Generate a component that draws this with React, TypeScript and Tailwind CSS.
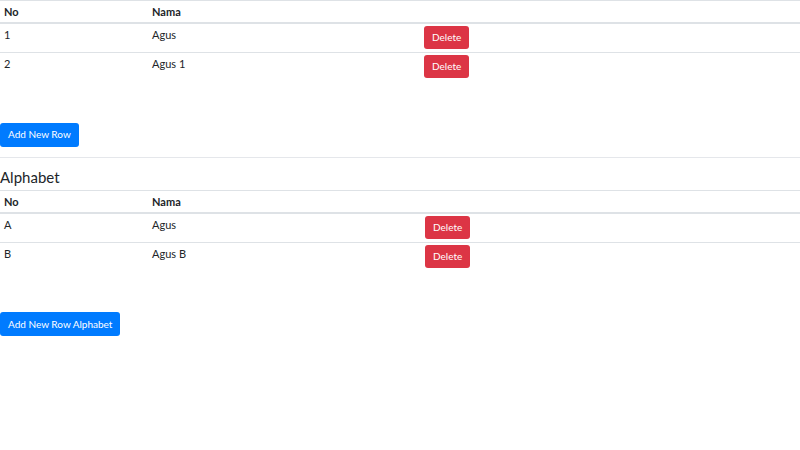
import React from "react";

type Row = { no: string; nama: string };

function DataTable({ rows, col2 }: { rows: Row[]; col2: string }) {
  return (
    <div className="w-full border-t border-[#dee2e6]">
      <div className={`grid ${col2} h-[23px] items-center border-b-2 border-[#dee2e6] text-[11px] font-bold leading-[13px]`}>
        <div className="pl-[4px]">No</div>
        <div className="pl-[4px]">Nama</div>
        <div />
      </div>
      {rows.map((r, i) => (
        <div
          key={i}
          className={`grid ${col2} items-start pt-[2px] pb-[3px] text-[11px] leading-[13px] ${i < rows.length - 1 ? "border-b border-[#dee2e6]" : ""}`}
        >
          <div className="pl-[4px] pt-[2px]">{r.no}</div>
          <div className="pl-[4px] pt-[2px]">{r.nama}</div>
          <div className="pl-[4px]">
            <button className="h-[23px] rounded-[3px] bg-[#dc3545] px-[8px] text-[10px] text-white">Delete</button>
          </div>
        </div>
      ))}
    </div>
  );
}

export default function App() {
  return (
    <div className="h-[450px] w-[800px] bg-white text-[#212529]" style={{ fontFamily: 'Lato, "Noto Sans", sans-serif' }}>
      <DataTable
        col2="grid-cols-[148px_272px_1fr]"
        rows={[
          { no: "1", nama: "Agus" },
          { no: "2", nama: "Agus 1" },
        ]}
      />
      <div className="mt-[39px]">
        <button className="h-[24px] rounded-[3px] bg-[#007bff] px-[8px] text-[10px] text-white">Add New Row</button>
      </div>
      <div className="mt-[10px] border-t border-[#e5e7eb]" />
      <div className="h-[32px] pt-[10px] text-[15px] leading-[18px]">Alphabet</div>
      <DataTable
        col2="grid-cols-[148px_273px_1fr]"
        rows={[
          { no: "A", nama: "Agus" },
          { no: "B", nama: "Agus B" },
        ]}
      />
      <div className="mt-[39px]">
        <button className="h-[24px] rounded-[3px] bg-[#007bff] px-[8px] text-[10px] text-white">Add New Row Alphabet</button>
      </div>
    </div>
  );
}
